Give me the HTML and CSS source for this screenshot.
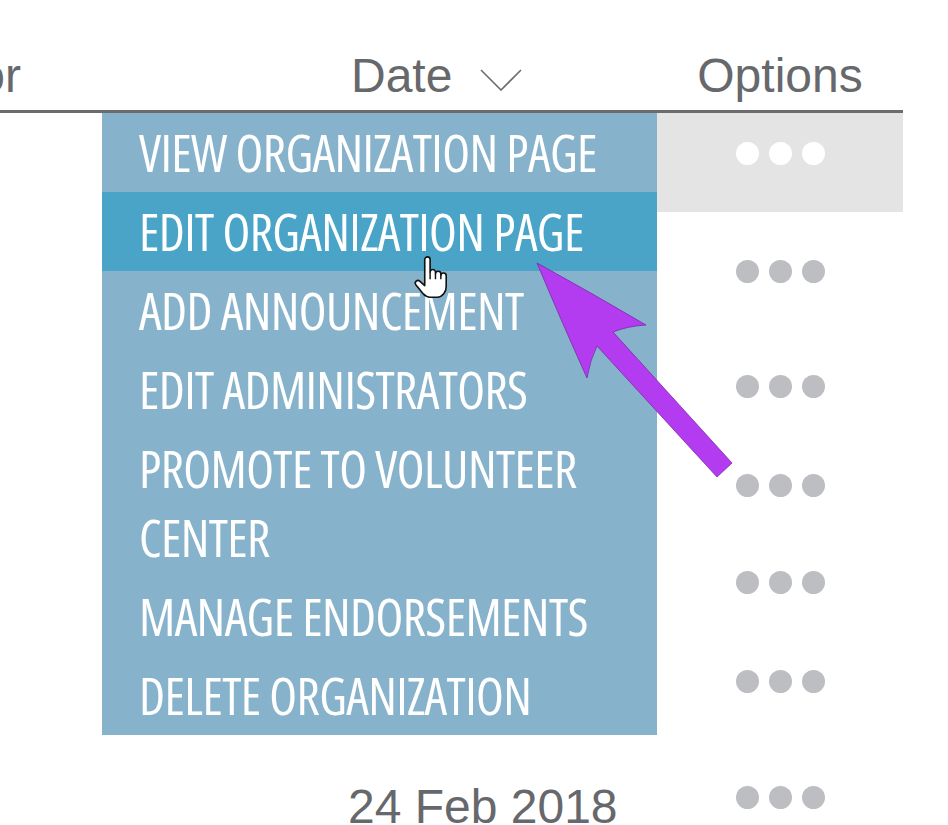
FILE: index.html
```
<!DOCTYPE html>
<html>
<head>
<meta charset="utf-8">
<link rel="stylesheet" href="styles.css">
</head>
<body>
<div class="table">
  <div class="head">
    <div class="c-name"><div class="cut"><span>Creator</span></div></div>
    <div class="c-date"><span class="date-label">Date</span><svg class="chev" width="42" height="22" viewBox="0 0 42 22"><path d="M1 1 L21 21 L41 1" fill="none" stroke="#6a6c70" stroke-width="1.6"/></svg></div>
    <div class="c-opt">Options</div>
  </div>
  <div class="row r1"><div class="c-name"></div><div class="c-date"></div><div class="c-opt hover"><span class="dots"><i></i><i></i><i></i></span></div></div>
  <div class="row r2"><div class="c-name"></div><div class="c-date"></div><div class="c-opt"><span class="dots"><i></i><i></i><i></i></span></div></div>
  <div class="row r3"><div class="c-name"></div><div class="c-date"></div><div class="c-opt"><span class="dots"><i></i><i></i><i></i></span></div></div>
  <div class="row r4"><div class="c-name"></div><div class="c-date"></div><div class="c-opt"><span class="dots"><i></i><i></i><i></i></span></div></div>
  <div class="row r5"><div class="c-name"></div><div class="c-date"></div><div class="c-opt"><span class="dots"><i></i><i></i><i></i></span></div></div>
  <div class="row r6"><div class="c-name"></div><div class="c-date"></div><div class="c-opt"><span class="dots"><i></i><i></i><i></i></span></div></div>
  <div class="row r7"><div class="c-name"></div><div class="c-date">24 Feb 2018</div><div class="c-opt"><span class="dots"><i></i><i></i><i></i></span></div></div>

  <ul class="menu">
    <li>VIEW ORGANIZATION PAGE</li>
    <li class="active">EDIT ORGANIZATION PAGE</li>
    <li>ADD ANNOUNCEMENT</li>
    <li>EDIT ADMINISTRATORS</li>
    <li>PROMOTE TO VOLUNTEER CENTER</li>
    <li>MANAGE ENDORSEMENTS</li>
    <li>DELETE ORGANIZATION</li>
  </ul>

  <svg class="cursor" width="34" height="45" viewBox="2 0 19 24"><path d="M8 2 a1.5 1.5 0 0 1 3 0 v7 a1.5 1.5 0 0 1 3 0 v1 a1.5 1.5 0 0 1 3 0 v1 a1.5 1.5 0 0 1 3 0 v6 c0 3 -2 6 -5 6 h-4 c-2 0 -3 -1 -4 -2 l-4 -5 a1.5 1.5 0 0 1 2.2 -2 l2.8 2.5 z" fill="#fff" stroke="#111" stroke-width="0.9" stroke-linejoin="round"/><path d="M11 9 v4 M14 10 v3 M17 11 v2" stroke="#111" stroke-width="0.8" fill="none"/></svg>

  <svg class="arrow" width="948" height="825" viewBox="0 0 948 825"><path d="M537 263 Q590 292 646 325 Q628 326 613 332 L732 463 L717 477 L597 346 Q590 360 587 378 Q560 318 537 263 Z" fill="#b43cf0" stroke="#7a2aa6" stroke-width="0.8"/></svg>
</div>
</body>
</html>
```
FILE: styles.css
```
html, body { margin: 0; padding: 0; background: #fff; overflow: hidden; }
body { font-family: "Liberation Sans", Arial, sans-serif; color: #66686c; }
.table { position: relative; width: 903px; }
.head { display: flex; height: 110px; align-items: flex-end; border-bottom: 3px solid #6a6c70; font-size: 48px; }
.head > div { padding-bottom: 7px; line-height: 55px; }
.c-name { width: 348px; flex: none; }
.c-date { width: 309px; flex: none; font-size: 48px; line-height: 55px; white-space: nowrap; }
.c-opt { width: 246px; flex: none; text-align: center; }
.cut { width: 21px; overflow: hidden; display: flex; justify-content: flex-end; white-space: nowrap; }
.cut span { flex: none; }
.date-label { margin-left: 3px; }
.chev { margin-left: 28px; vertical-align: 1px; }
.row { display: flex; align-items: center; }
.row .c-opt { display: flex; justify-content: center; align-items: center; align-self: stretch; }
.dots { display: flex; gap: 10px; }
.dots i { width: 23px; height: 23px; border-radius: 50%; background: #bdbec1; display: block; }
.hover { background: #e5e4e5; }
.hover .dots i { background: #fff; }
.r1 { height: 99px; }
.r1 .c-opt { align-items: flex-start; padding-top: 29px; box-sizing: border-box; }
.r2 { height: 118px; }
.r3 { height: 112px; }
.r4 { height: 86px; }
.r5 { height: 108px; }
.r6 { height: 90px; }
.r7 { height: 142px; align-items: flex-start; }
.r7 .c-opt { align-items: flex-start; padding-top: 60px; box-sizing: border-box; }
.r7 .c-date { padding-top: 53px; }
.menu { position: absolute; left: 102px; top: 113px; width: 555px; margin: 0; padding: 0; list-style: none; background: #86b2cb; color: #fff; font-family: "Open Sans", sans-serif; font-stretch: 75%; font-weight: 500; }
.menu li { padding: 5px 40px 5px 37px; font-size: 51px; line-height: 69px; letter-spacing: -0.6px; }
.menu li.active { background: #49a4c8; }
.cursor { position: absolute; left: 414px; top: 255px; }
.arrow { position: absolute; left: 0; top: 0; pointer-events: none; }
```
